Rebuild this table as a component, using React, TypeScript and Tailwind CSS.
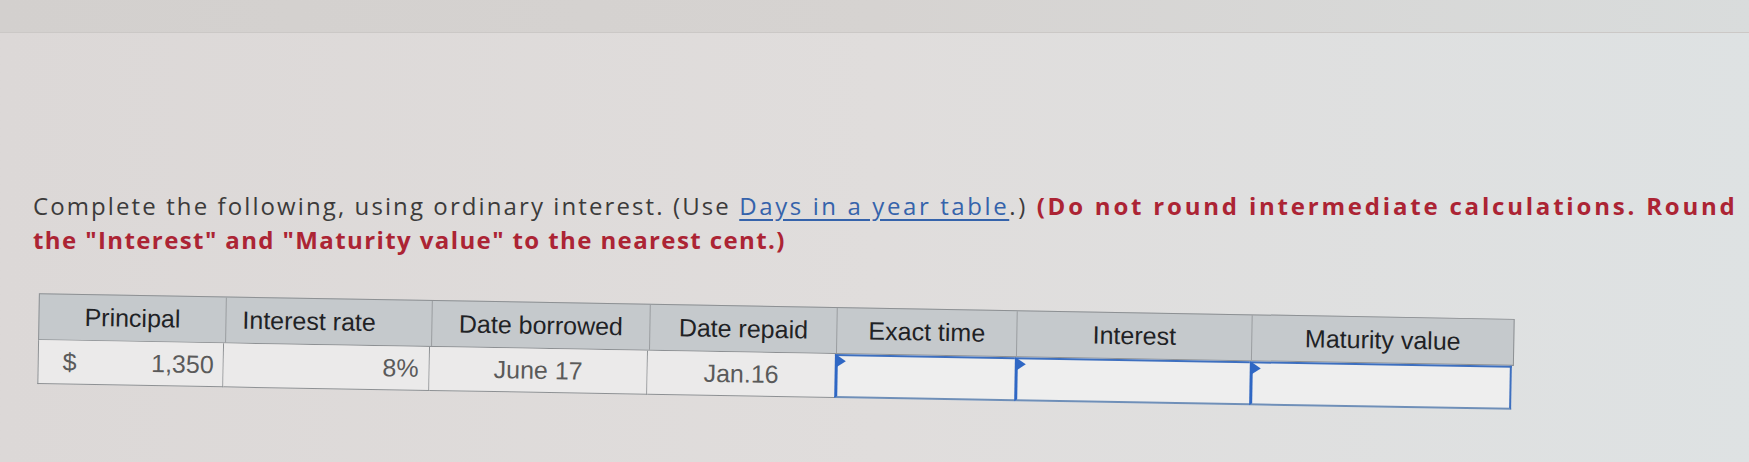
import { Fragment } from "react";

const columns = [
  { label: "Principal", width: "w-[186px]", align: "text-center" },
  { label: "Interest rate", width: "w-[206px]", align: "text-left pl-[16px]" },
  { label: "Date borrowed", width: "w-[218px]", align: "text-center" },
  { label: "Date repaid", width: "w-[187px]", align: "text-center" },
  { label: "Exact time", width: "w-[180px]", align: "text-center" },
  { label: "Interest", width: "w-[235px]", align: "text-center" },
  { label: "Maturity value", width: "w-[262px]", align: "text-center" },
];

const InputCell = ({ width, last }: { width: string; last?: boolean }) => (
  <div
    className={`relative ${width} h-[44px] bg-[#eeeeee] border-l-[3px] border-l-[#2f67c4] border-t-2 border-t-[#3d6fbf] border-b-2 border-b-[#6f8fb8] ${
      last ? "border-r-2 border-r-[#3d6fbf]" : ""
    }`}
  >
    <span className="absolute left-[-1px] top-[-1px] h-0 w-0 border-y-[6px] border-y-transparent border-l-[9px] border-l-[#2f67c4]" />
  </div>
);

export default function App() {
  return (
    <div className="w-[1749px] h-[462px] overflow-hidden bg-linear-to-r from-[#dcd8d7] via-[#e0dddc] to-[#dee2e3] font-['Open_Sans',sans-serif]">
      <div className="h-[33px] bg-linear-to-r from-[#d3d0ce] via-[#d6d3d1] to-[#d9dcdc] border-b border-[#cbc8c6]" />

      <div className="mt-[156px] pl-[33px] text-[24px] leading-[34px] text-[#3c3b3b] whitespace-nowrap">
        <p className="tracking-[2.1px]">
          Complete the following, using ordinary interest. (Use{" "}
          <span className="tracking-[2.6px] text-[#3563ab] underline underline-offset-[4px] decoration-[#3563ab]">
            Days in a year table
          </span>
          <span className="tracking-[2.6px]">.) </span>
          <span className="tracking-[2.8px] font-bold text-[#ac2434]">
            (Do not round intermediate calculations. Round
          </span>
        </p>
        <p className="tracking-[1.4px] font-bold text-[#ac2434]">
          the "Interest" and "Maturity value" to the nearest cent.)
        </p>
      </div>

      <div className="mt-[49px] ml-[38px] w-fit rotate-[1deg] font-['Liberation_Sans',Arial,sans-serif] text-[25px]">
        <div className="flex bg-[#c5c9cc] border border-[#8d9093] h-[47px] items-center">
          {columns.map((c, i) => (
            <div
              key={c.label}
              className={`${c.width} ${c.align} h-full flex items-center ${
                c.align.includes("center") ? "justify-center" : ""
              } text-[#1f2225] ${i > 0 ? "border-l border-[#9a9da0]" : ""}`}
            >
              {c.label}
            </div>
          ))}
        </div>
        <div className="flex h-[44px] text-[#5a5a5a]">
          <div className="w-[186px] flex items-center justify-between pl-[24px] pr-[9px] bg-[#ebeaea] border border-t-0 border-[#8d9093]">
            <span>$</span>
            <span>1,350</span>
          </div>
          <div className="w-[206px] flex items-center justify-end pr-[10px] bg-[#ebeaea] border-b border-r border-[#8d9093]">
            8%
          </div>
          <div className="w-[218px] flex items-center justify-center bg-[#ebeaea] border-b border-r border-[#8d9093]">
            June 17
          </div>
          <div className="w-[187px] flex items-center justify-center bg-[#ebeaea] border-b border-[#8d9093]">
            Jan.16
          </div>
          {columns.slice(4).map((c, i) => (
            <Fragment key={c.label}>
              <InputCell width={c.width} last={i === 2} />
            </Fragment>
          ))}
        </div>
      </div>
    </div>
  );
}
